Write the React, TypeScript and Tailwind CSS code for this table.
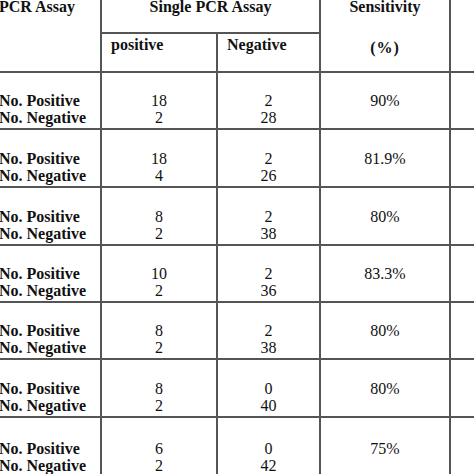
import React from "react"

type Row = {
  pos: [string, string]
  neg: [string, string]
  sens: string
  h: string
}

const rows: Row[] = [
  { pos: ["18", "2"], neg: ["2", "28"], sens: "90%", h: "h-[57px]" },
  { pos: ["18", "4"], neg: ["2", "26"], sens: "81.9%", h: "h-[58px]" },
  { pos: ["8", "2"], neg: ["2", "38"], sens: "80%", h: "h-[58px]" },
  { pos: ["10", "2"], neg: ["2", "36"], sens: "83.3%", h: "h-[57px]" },
  { pos: ["8", "2"], neg: ["2", "38"], sens: "80%", h: "h-[57px]" },
  { pos: ["8", "2"], neg: ["0", "40"], sens: "80%", h: "h-[58px]" },
  { pos: ["6", "2"], neg: ["0", "42"], sens: "75%", h: "h-[60px]" },
]

const cols = "grid grid-cols-[102px_116px_103px_130px_1fr]"
const line = "border-[#555]"

function Cell({ a, b, className = "" }: { a: string; b: string; className?: string }) {
  return (
    <div className={`flex flex-col justify-end pb-[2px] leading-[17px] ${className}`}>
      <span>{a}</span>
      <span>{b}</span>
    </div>
  )
}

export default function App() {
  return (
    <div
      className="w-[474px] h-[474px] overflow-hidden bg-white text-[#111] text-[16px]"
      style={{ fontFamily: '"Liberation Serif", "Times New Roman", serif' }}
    >
      {/* header */}
      <div className={`${cols} grid-rows-[34px_39px]`}>
        <div className={`row-span-2 border-r-2 border-b-2 ${line} font-bold leading-[14px] -ml-[1px]`}>
          PCR Assay
        </div>
        <div className={`col-span-2 border-r-2 border-b-2 ${line} font-bold leading-[14px] text-center`}>
          Single PCR Assay
        </div>
        <div className={`row-span-2 border-r-2 border-b-2 ${line} font-bold leading-[14px] flex flex-col items-center`}>
          <span>Sensitivity</span>
          <span className="mt-[25px] leading-[18px] tracking-[1px]">(%)</span>
        </div>
        <div className={`row-span-2 border-b-2 ${line}`} />
        <div className={`border-r-2 border-b-2 ${line} font-bold leading-[18px] pl-[9px] pt-[2px]`}>
          positive
        </div>
        <div className={`border-r-2 border-b-2 ${line} font-bold leading-[18px] pl-[9px] pt-[2px]`}>
          Negative
        </div>
      </div>

      {/* data rows */}
      {rows.map((r, i) => (
        <div key={i} className={`${cols} ${r.h}`}>
          <Cell a="No. Positive" b="No. Negative" className={`border-r-2 border-b-2 ${line} font-bold -ml-[1px] whitespace-nowrap`} />
          <Cell a={r.pos[0]} b={r.pos[1]} className={`border-r-2 border-b-2 ${line} items-center`} />
          <Cell a={r.neg[0]} b={r.neg[1]} className={`border-r-2 border-b-2 ${line} items-center`} />
          <Cell a={r.sens} b={"\u00a0"} className={`border-r-2 border-b-2 ${line} items-center`} />
          <div className={`border-b-2 ${line}`} />
        </div>
      ))}
    </div>
  )
}
